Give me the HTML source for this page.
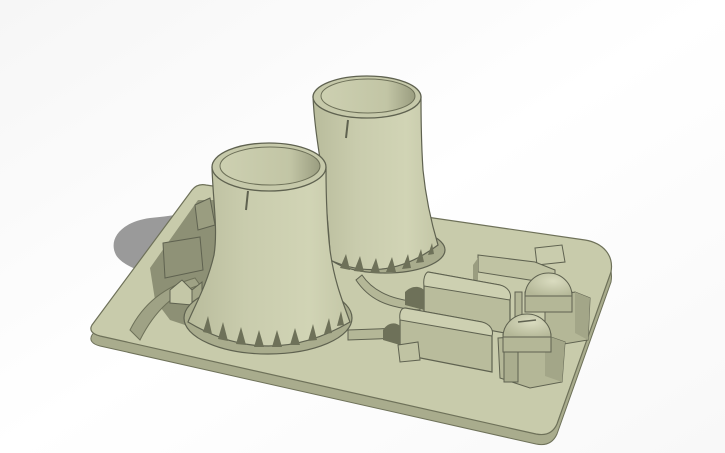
<!DOCTYPE html>
<html><head><meta charset="utf-8"><style>
html,body{margin:0;padding:0;background:#fff;width:725px;height:453px;overflow:hidden}
</style></head><body>
<svg width="725" height="453" viewBox="0 0 725 453" xmlns="http://www.w3.org/2000/svg">
<defs>
<linearGradient id="bg" x1="0" y1="0" x2="1" y2="1">
<stop offset="0" stop-color="#f6f6f6"/><stop offset="0.5" stop-color="#ffffff"/><stop offset="1" stop-color="#f8f8f8"/>
</linearGradient>
<linearGradient id="tw" x1="0" y1="0" x2="1" y2="0">
<stop offset="0" stop-color="#b9bc9c"/><stop offset="0.35" stop-color="#c9ccad"/><stop offset="0.75" stop-color="#d1d4b5"/><stop offset="1" stop-color="#c3c6a6"/>
</linearGradient>
<linearGradient id="in" x1="0" y1="0" x2="1" y2="0">
<stop offset="0" stop-color="#cdd0b1"/><stop offset="0.7" stop-color="#c2c5a5"/><stop offset="1" stop-color="#9a9d80"/>
</linearGradient>
<radialGradient id="dm" cx="0.6" cy="0.35" r="0.7">
<stop offset="0" stop-color="#dadcc0"/><stop offset="1" stop-color="#b4b797"/>
</radialGradient>
</defs>
<rect width="725" height="453" fill="url(#bg)"/>
<path d="M150 218 C120 222 108 240 116 255 C122 265 140 272 160 276 L200 210 C185 214 170 216 150 218Z" fill="#9a9a9a"/>
<!-- plate side -->
<path transform="translate(0,10)" d="M92 325 L192 190 C196 185 201 184 206 185 L585 240 C603 243 614 255 611 272 L557 424 C553 433 546 436 536 434 L100 336 C92 334 89 330 92 325Z" fill="#a9ac8d" stroke="#6e7159" stroke-width="1"/>
<path d="M92 325 L192 190 C196 185 201 184 206 185 L585 240 C603 243 614 255 611 272 L557 424 C553 433 546 436 536 434 L100 336 C92 334 89 330 92 325Z" fill="#c8cbab" stroke="#6e7159" stroke-width="1.2"/>
<path d="M150 268 L198 200 L215 200 L222 280 L200 330 L170 320 L155 300Z" fill="#8d9075"/>
<path d="M130 330 C145 300 170 285 195 278 L200 285 C175 292 155 310 140 340Z" fill="#9fa285" stroke="#6e7159" stroke-width="1"/>
<polygon points="163,243 200,237 203,270 165,278" fill="#8f9277" stroke="#5f6250" stroke-width="1"/>
<polygon points="170,290 182,280 192,290 192,305 170,303" fill="#c4c7a7" stroke="#5f6250" stroke-width="1"/>
<polygon points="192,290 202,282 202,297 192,305" fill="#a3a688" stroke="#5f6250" stroke-width="1"/>
<polygon points="195,205 210,198 215,225 198,230" fill="#9a9d80" stroke="#5f6250" stroke-width="1"/>
<ellipse cx="385" cy="250" rx="60" ry="23" fill="#a9ac8d" stroke="#5f6250" stroke-width="1.2"/>
<path d="M313 97 C315 140 325 180 327 215 C329 235 330 250 330 260 Q385 285 438 245 C432 225 426 200 423 170 C421 140 421 115 421 97 Z" fill="url(#tw)" stroke="#5f6250" stroke-width="1.2"/>
<g fill="#6e7159">
<polygon points="340,268 346,254 350,270"/><polygon points="354,271 360,256 364,272"/><polygon points="370,273 376,258 380,273"/><polygon points="386,272 392,257 396,272"/><polygon points="402,269 408,254 411,268"/><polygon points="416,263 421,249 424,262"/><polygon points="428,255 432,243 434,254"/>
</g>
<ellipse cx="367" cy="97" rx="54" ry="21" fill="#c6c9aa" stroke="#5f6250" stroke-width="1.3"/>
<ellipse cx="368" cy="96" rx="47" ry="17" fill="url(#in)" stroke="#6e7159" stroke-width="1"/>
<line x1="348" y1="120" x2="346" y2="138" stroke="#5f6250" stroke-width="2"/>
<path d="M362 275 C372 290 390 300 420 302 L420 310 C385 308 368 298 356 280Z" fill="#b4b797" stroke="#5f6250" stroke-width="1"/>
<path d="M348 330 L400 328 L400 338 L348 340Z" fill="#b4b797" stroke="#5f6250" stroke-width="1"/>
<ellipse cx="268" cy="318" rx="84" ry="36" fill="#a9ac8d" stroke="#5f6250" stroke-width="1.2"/>
<path d="M212 168 C213 200 218 230 214 255 C207 285 195 305 188 322 Q268 370 350 322 C342 300 334 280 330 250 C327 225 326 200 326 168 Z" fill="url(#tw)" stroke="#5f6250" stroke-width="1.2"/>
<g fill="#6e7159">
<polygon points="203,332 208,316 212,334"/><polygon points="218,339 223,322 228,341"/><polygon points="236,344 241,327 246,345"/><polygon points="254,347 259,330 264,347"/><polygon points="272,347 277,330 282,347"/><polygon points="290,345 295,328 300,345"/><polygon points="308,341 313,324 317,340"/><polygon points="324,334 329,318 332,333"/><polygon points="337,326 341,311 344,325"/>
</g>
<ellipse cx="269" cy="167" rx="57" ry="24" fill="#c6c9aa" stroke="#5f6250" stroke-width="1.3"/>
<ellipse cx="270" cy="166" rx="50" ry="19" fill="url(#in)" stroke="#6e7159" stroke-width="1"/>
<line x1="248" y1="191" x2="246" y2="210" stroke="#5f6250" stroke-width="2"/>
<polygon points="535,248 562,245 565,262 537,265" fill="#c9ccad" stroke="#5f6250" stroke-width="1"/>
<polygon points="478,255 535,262 555,270 555,284 478,272" fill="#c0c3a3" stroke="#5f6250" stroke-width="1"/>
<polygon points="473,265 478,258 478,280 473,283" fill="#9a9d80"/>
<polygon points="428,272 500,285 510,300 510,334 424,318 424,285" fill="#b9bc9c" stroke="#5f6250" stroke-width="1.2"/>
<path d="M428 272 L500 285 C508 287 512 293 510 300 L424 286 C423 279 425 273 428 272Z" fill="#cdd0b1" stroke="#5f6250" stroke-width="1"/>
<path d="M405 292 C412 285 420 286 424 290 L424 310 L405 305Z" fill="#6e7159"/>
<polygon points="545,298 575,292 590,298 588,340 558,345 545,338" fill="#b4b797" stroke="#5f6250" stroke-width="1"/>
<polygon points="575,292 590,298 588,340 575,333" fill="#a3a688"/>
<rect x="525" y="292" width="47" height="20" fill="#b4b797" stroke="#5f6250" stroke-width="1"/>
<path d="M525 296 A23.5 23 0 0 1 572 296 Z" fill="url(#dm)" stroke="#5f6250" stroke-width="1"/>
<rect x="515" y="292" width="7" height="30" fill="#b4b797" stroke="#5f6250" stroke-width="1"/>
<polygon points="405,308 482,322 492,336 492,372 400,354 400,320" fill="#b9bc9c" stroke="#5f6250" stroke-width="1.2"/>
<path d="M405 308 L482 322 C490 324 494 330 492 336 L400 320 C399 313 401 308 405 308Z" fill="#cdd0b1" stroke="#5f6250" stroke-width="1"/>
<path d="M383 330 C388 322 396 322 400 326 L400 345 L383 340Z" fill="#6e7159"/>
<polygon points="398,345 418,342 420,360 400,362" fill="#c0c3a3" stroke="#5f6250" stroke-width="1"/>
<polygon points="498,338 545,335 565,342 562,382 530,388 500,378" fill="#b4b797" stroke="#5f6250" stroke-width="1"/>
<polygon points="545,335 565,342 562,382 545,376" fill="#a3a688"/>
<rect x="504" y="340" width="14" height="42" fill="#aaad8e" stroke="#5f6250" stroke-width="1"/>
<rect x="503" y="334" width="48" height="18" fill="#b4b797" stroke="#5f6250" stroke-width="1"/>
<path d="M503 337 A24 23 0 0 1 551 337 Z" fill="url(#dm)" stroke="#5f6250" stroke-width="1"/>
<line x1="518" y1="322" x2="536" y2="320" stroke="#5f6250" stroke-width="1.5"/>
</svg>
</body></html>
